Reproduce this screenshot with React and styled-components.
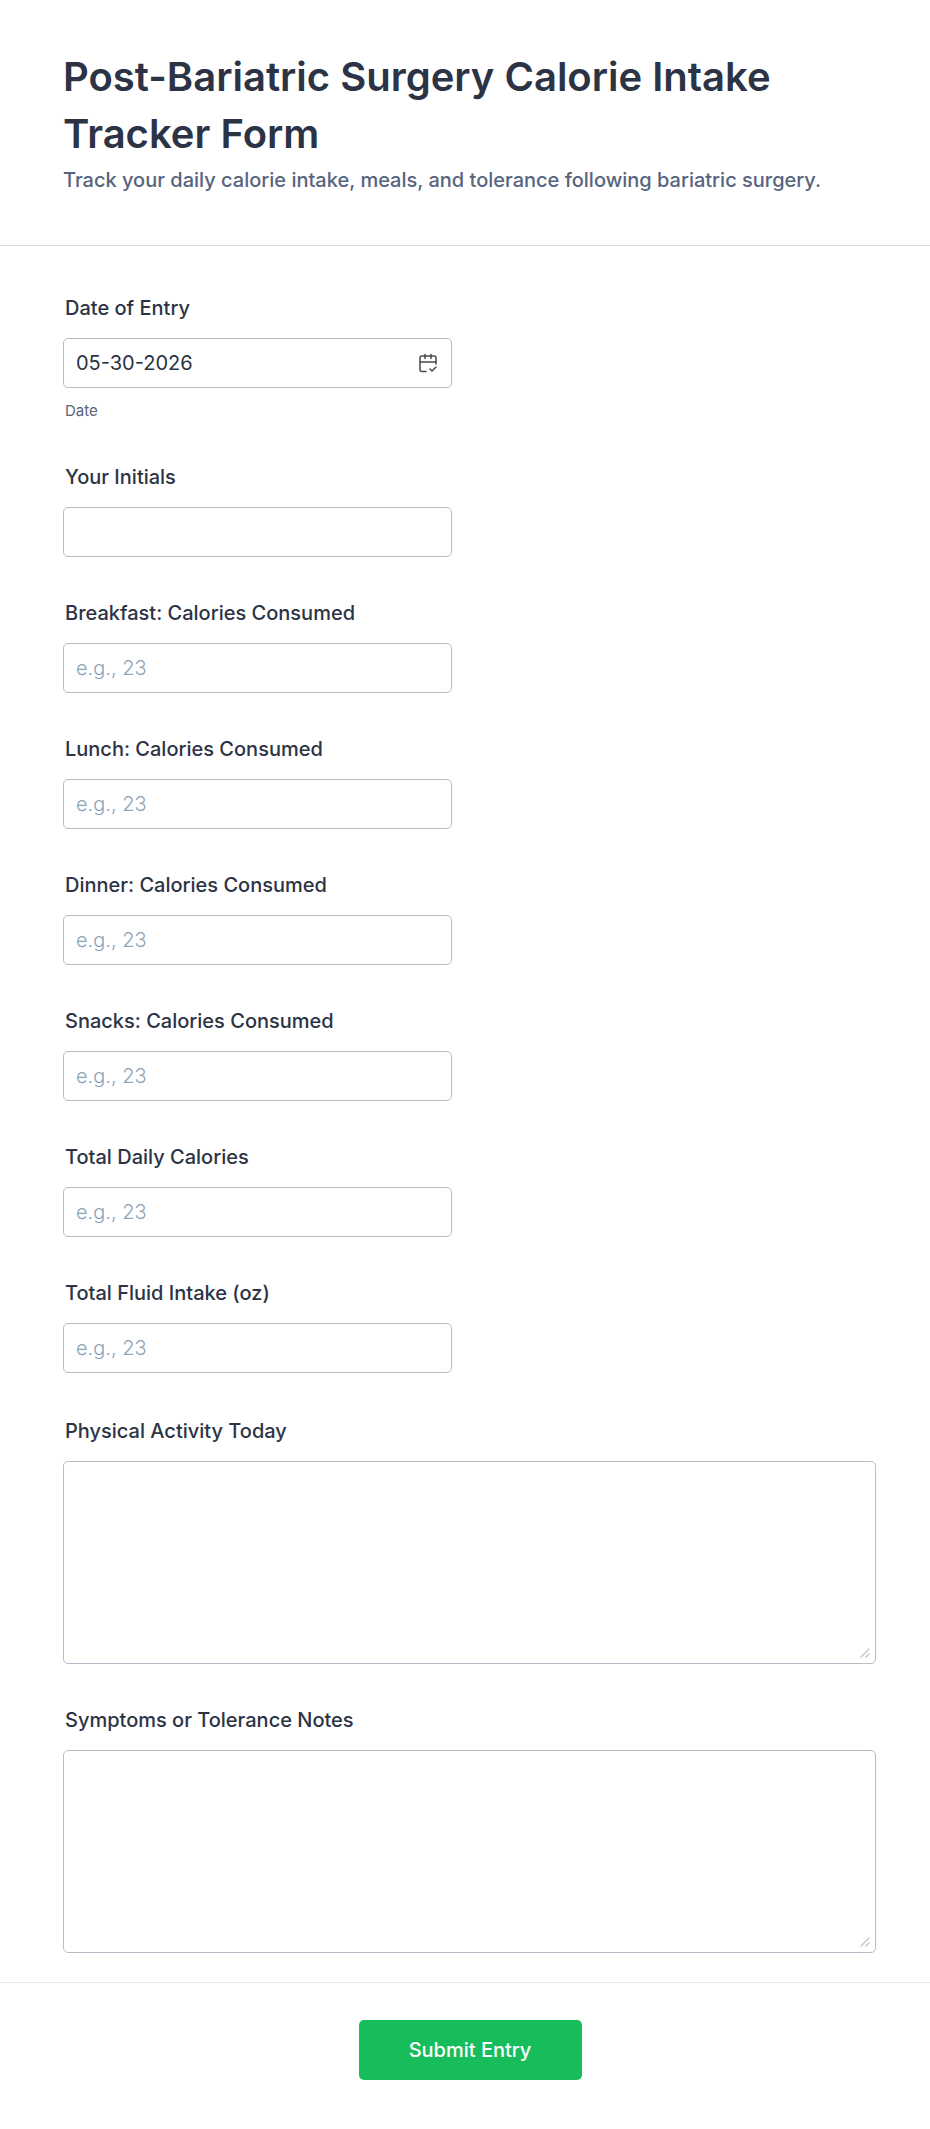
import React from 'react';
import styled, { createGlobalStyle } from 'styled-components';

const GlobalStyle = createGlobalStyle`
  *, *::before, *::after {
    box-sizing: border-box;
  }

  body {
    margin: 0;
    background: #ffffff;
    color: #2c3345;
    font-family: Inter, "Liberation Sans", sans-serif;
  }
`;

const Header = styled.header`
  padding: 48px 63px 51px;
  border-bottom: 1px solid #d7d8e1;
`;

const Title = styled.h1`
  margin: 0;
  font-size: 40px;
  font-weight: 600;
  line-height: 57px;
`;

const Subtitle = styled.p`
  margin: 4px 0 0;
  color: #57647e;
  font-size: 20px;
  font-weight: 500;
  line-height: 28px;
`;

const Fields = styled.div`
  display: flex;
  flex-direction: column;
  gap: 46px;
  padding: 50px 54px 29px 63px;
`;

const FieldGroup = styled.div`
  display: flex;
  flex-direction: column;
  gap: 44px;
`;

const Field = styled.div`
  display: flex;
  flex-direction: column;
  align-items: flex-start;
`;

const Label = styled.label`
  margin-bottom: 18px;
  padding-left: 2px;
  font-size: 20px;
  font-weight: 500;
  line-height: 24px;
`;

const InputWrap = styled.div`
  display: flex;
  position: relative;
  width: 100%;
  max-width: 389px;
`;

const Input = styled.input`
  width: 100%;
  height: 50px;
  padding: 0 ${props => props.$hasIcon ? '44px' : '12px'} 0 12px;
  border: 1px solid #b8bdc9;
  border-radius: 5px;
  background: #ffffff;
  color: #2c3345;
  font: inherit;
  font-size: 20px;

  &::placeholder {
    color: #8fa3b8;
    font-weight: 300;
    opacity: 1;
  }
`;

const TextAreaWrap = styled.div`
  display: flex;
  position: relative;
  width: 100%;
`;

const TextArea = styled.textarea`
  width: 100%;
  height: 203px;
  padding: 12px;
  border: 1px solid #b8bdc9;
  border-radius: 5px;
  color: #2c3345;
  font: inherit;
  font-size: 20px;
  resize: vertical;

  &::-webkit-resizer {
    display: none;
  }
`;

const Grip = styled.svg`
  position: absolute;
  right: 6px;
  bottom: 6px;
  pointer-events: none;
`;

const PickerButton = styled.button`
  position: absolute;
  top: 15px;
  right: 14px;
  display: flex;
  padding: 0;
  border: 0;
  background: none;
  color: #4a4650;
`;

const SubLabel = styled.span`
  margin-top: 13px;
  padding-left: 2px;
  color: #57647e;
  font-size: 15px;
  line-height: 20px;
`;

const Footer = styled.footer`
  display: flex;
  justify-content: center;
  padding: 37px 53px 49px 63px;
  border-top: 1px solid #e9ebf2;
`;

const SubmitButton = styled.button`
  min-width: 223px;
  height: 60px;
  border: 0;
  border-radius: 5px;
  background: #18bd5b;
  color: #ffffff;
  font: inherit;
  font-size: 20px;
  font-weight: 500;
`;

const fields = [
  { id: 'initials', label: 'Your Initials' },
  { id: 'breakfast', label: 'Breakfast: Calories Consumed', placeholder: 'e.g., 23' },
  { id: 'lunch', label: 'Lunch: Calories Consumed', placeholder: 'e.g., 23' },
  { id: 'dinner', label: 'Dinner: Calories Consumed', placeholder: 'e.g., 23' },
  { id: 'snacks', label: 'Snacks: Calories Consumed', placeholder: 'e.g., 23' },
  { id: 'total', label: 'Total Daily Calories', placeholder: 'e.g., 23' },
  { id: 'fluid', label: 'Total Fluid Intake (oz)', placeholder: 'e.g., 23' },
];

const notes = [
  { id: 'activity', label: 'Physical Activity Today' },
  { id: 'symptoms', label: 'Symptoms or Tolerance Notes' },
];

const CalendarIcon = () => (
  <svg width="20" height="20" viewBox="0 0 20 20" fill="none" stroke="currentColor" strokeWidth="1.5" strokeLinecap="round" strokeLinejoin="round">
    <path d="M8 18.5H4a2 2 0 0 1-2-2V5a2 2 0 0 1 2-2h12a2 2 0 0 1 2 2v6M2 9h16M7 1.5v4M13 1.5v4M12 16l2 2 4-4" />
  </svg>
);

const ResizeGrip = () => (
  <Grip width="10" height="10" viewBox="0 0 10 10" fill="none" stroke="#c8cad2" strokeWidth="1.6" strokeLinecap="round" aria-hidden="true">
    <path d="M1 9l8-8M6 9l3-3" />
  </Grip>
);

export default function App() {
  return (
    <form onSubmit={event => event.preventDefault()}>
      <GlobalStyle />
      <Header>
        <Title>Post-Bariatric Surgery Calorie Intake Tracker Form</Title>
        <Subtitle>Track your daily calorie intake, meals, and tolerance following bariatric surgery.</Subtitle>
      </Header>
      <Fields>
        <FieldGroup>
          <Field>
            <Label htmlFor="date">Date of Entry</Label>
            <InputWrap>
              <Input id="date" type="text" defaultValue="05-30-2026" aria-describedby="date-hint" $hasIcon />
              <PickerButton type="button" aria-label="Choose date"><CalendarIcon /></PickerButton>
            </InputWrap>
            <SubLabel id="date-hint">Date</SubLabel>
          </Field>
          {fields.map(field => (
            <Field key={field.id}>
              <Label htmlFor={field.id}>{field.label}</Label>
              <InputWrap>
                <Input id={field.id} type="text" placeholder={field.placeholder} />
              </InputWrap>
            </Field>
          ))}
        </FieldGroup>
        <FieldGroup>
          {notes.map(note => (
            <Field key={note.id}>
              <Label htmlFor={note.id}>{note.label}</Label>
              <TextAreaWrap>
                <TextArea id={note.id} />
                <ResizeGrip />
              </TextAreaWrap>
            </Field>
          ))}
        </FieldGroup>
      </Fields>
      <Footer>
        <SubmitButton type="submit">Submit Entry</SubmitButton>
      </Footer>
    </form>
  );
}
